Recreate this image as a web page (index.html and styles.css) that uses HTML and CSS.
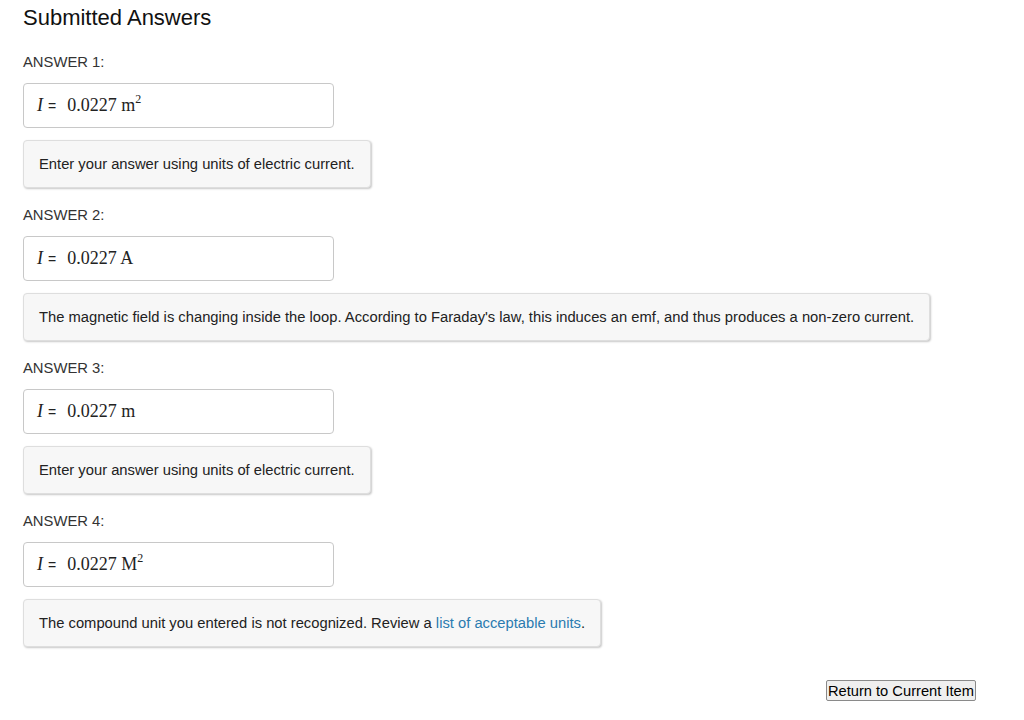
FILE: index.html
```html
<!DOCTYPE html>
<html lang="en">
<head>
    <meta charset="UTF-8">
    <title>Submitted Answers</title>
    <link rel="stylesheet" href="styles.css">
</head>
<body>
    <div class="page">
        <h2 class="title">Submitted Answers</h2>

        <!-- Answer 1 -->
        <div class="answer">
            <div class="answer-label">ANSWER 1:</div>
            <div class="answer-box">
                <span class="var">I</span><span class="eq">=</span><span class="val">0.0227 m<sup>2</sup></span>
            </div>
            <div class="feedback">Enter your answer using units of electric current.</div>
        </div>

        <!-- Answer 2 -->
        <div class="answer">
            <div class="answer-label">ANSWER 2:</div>
            <div class="answer-box">
                <span class="var">I</span><span class="eq">=</span><span class="val">0.0227 A</span>
            </div>
            <div class="feedback">The magnetic field is changing inside the loop. According to Faraday's law, this induces an emf, and thus produces a non-zero current.</div>
        </div>

        <!-- Answer 3 -->
        <div class="answer">
            <div class="answer-label">ANSWER 3:</div>
            <div class="answer-box">
                <span class="var">I</span><span class="eq">=</span><span class="val">0.0227 m</span>
            </div>
            <div class="feedback">Enter your answer using units of electric current.</div>
        </div>

        <!-- Answer 4 -->
        <div class="answer">
            <div class="answer-label">ANSWER 4:</div>
            <div class="answer-box">
                <span class="var">I</span><span class="eq">=</span><span class="val">0.0227 M<sup>2</sup></span>
            </div>
            <div class="feedback">The compound unit you entered is not recognized. Review a <a href="#">list of acceptable units</a>.</div>
        </div>

        <div class="actions">
            <button class="return-btn">Return to Current Item</button>
        </div>
    </div>
</body>
</html>
```

FILE: styles.css
```css
* {
    margin: 0;
    padding: 0;
    box-sizing: border-box;
}

body {
    font-family: 'Liberation Sans', Arial, sans-serif;
    color: #222;
    background: #fff;
}

.page {
    padding: 6px 48px 0 23px;
}

.title {
    font-size: 22px;
    font-weight: normal;
    color: #111;
    line-height: 24px;
    margin-bottom: 23px;
}

/* Answer blocks */
.answer {
    display: flex;
    flex-direction: column;
    align-items: flex-start;
    margin-bottom: 18px;
}

.answer-label {
    font-size: 14.8px;
    line-height: 18px;
    color: #333;
    margin-bottom: 12px;
}

.answer-box {
    width: 311px;
    height: 45px;
    border: 1px solid #c8c8c8;
    border-radius: 4px;
    display: flex;
    align-items: center;
    padding-left: 13px;
    font-family: 'Liberation Serif', 'Times New Roman', serif;
    font-size: 18px;
    color: #222;
}

.answer-box .var {
    font-style: italic;
}

.answer-box .eq {
    font-family: 'Liberation Sans', Arial, sans-serif;
    font-size: 14px;
    margin: 0 11px 0 5px;
}

.answer-box sup {
    font-size: 12px;
    vertical-align: 8px;
    line-height: 0;
}

.feedback {
    margin-top: 12px;
    padding: 14px 15px;
    line-height: 18px;
    background: #f7f7f7;
    border: 1px solid #dedede;
    border-radius: 4px;
    box-shadow: 1px 1px 2px rgba(0, 0, 0, 0.22);
    font-size: 14.75px;
    color: #222;
}

.feedback a {
    color: #2b7bb0;
    text-decoration: none;
}

.actions {
    display: flex;
    justify-content: flex-end;
    margin-top: 33px;
}

.return-btn {
    font-family: 'Liberation Sans', Arial, sans-serif;
    font-size: 14.7px;
    color: #000;
    background: #efefef;
    border: 1px solid #8a8a8a;
    border-radius: 2px;
    padding: 0 1px;
    height: 21px;
    line-height: 18px;
}
```
